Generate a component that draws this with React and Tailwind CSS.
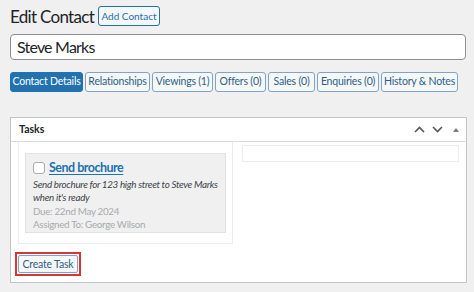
import React from 'react';

const font = { fontFamily: 'Lato, "Noto Sans", sans-serif' };

const tabs = [
  { label: 'Contact Details', w: 'w-[73px]' },
  { label: 'Relationships', w: 'w-[65px]' },
  { label: 'Viewings (1)', w: 'w-[61px]' },
  { label: 'Offers (0)', w: 'w-[51px]' },
  { label: 'Sales (0)', w: 'w-[47px]' },
  { label: 'Enquiries (0)', w: 'w-[62px]' },
  { label: 'History & Notes', w: 'w-[77px]' },
];

function Chevron({ up }) {
  return (
    <svg width="11" height="7" viewBox="0 0 11 7" fill="none">
      <path
        d={up ? 'M1 6 L5.5 1.5 L10 6' : 'M1 1 L5.5 5.5 L10 1'}
        stroke="#50575e"
        strokeWidth="1.6"
      />
    </svg>
  );
}

export default function App() {
  return (
    <div
      className="w-[474px] h-[292px] overflow-hidden bg-[#f0f0f1] px-[10px] pt-[6px] text-[#1d2327]"
      style={font}
    >
      {/* Title */}
      <div className="flex items-center gap-[6px] h-[20px]">
        <h1 className="w-[82px] text-[17px] leading-none font-normal tracking-[-0.7px] whitespace-nowrap">Edit Contact</h1>
        <button className="h-[20px] w-[62px] text-[10px] text-[#2271b1] border border-[#2271b1] bg-[#f6f7f7] rounded-[3px] leading-none whitespace-nowrap">
          Add Contact
        </button>
      </div>

      {/* Name input */}
      <div className="mt-[8px] w-[456px] h-[26px] flex items-center bg-white border border-[#8c8f94] rounded-[4px] px-[6px] text-[16px] tracking-[-0.8px]">
        Steve Marks
      </div>

      {/* Tabs */}
      <div className="mt-[12px] flex gap-[2px] h-[20px]">
        {tabs.map((t, i) => (
          <div
            key={t.label}
            className={
              i === 0
                ? `${t.w} h-full flex items-center justify-center whitespace-nowrap text-[10.5px] tracking-[-0.2px] rounded-[3px] bg-[#2271b1] text-white border border-[#2271b1]`
                : `${t.w} h-full flex items-center justify-center whitespace-nowrap text-[10.5px] tracking-[-0.2px] rounded-[3px] bg-[#f6f7f7] text-[#2c5f8a] border border-[#7fa4c6]`
            }
          >
            {t.label}
          </div>
        ))}
      </div>

      {/* Tasks panel */}
      <div className="mt-[25px] w-[457px] h-[166px] bg-white border border-[#c3c4c7]">
        <div className="h-[24px] flex items-center justify-between border-b border-[#dcdcde] pl-[8px] pr-[6px]">
          <span className="text-[10.5px] font-bold">Tasks</span>
          <div className="flex items-center gap-[7px]">
            <Chevron up />
            <Chevron />
            <svg width="8" height="6" viewBox="0 0 8 6" className="ml-[2px]">
              <path d="M4 1 L7 5 L1 5 Z" fill="#787c82" />
            </svg>
          </div>
        </div>

        <div className="flex pl-[7px] pr-[7px]">
          {/* left column */}
          <div className="w-[215px]">
            <div className="w-[215px] h-[102px] border border-t-0 border-[#ececed] px-[6px] pt-[11px]">
              <div className="w-[201px] h-[80px] bg-[#f0f0f1] border border-[#e2e2e4] pl-[7px] pt-[7px]">
                <div className="flex items-center gap-[4px] h-[14px]">
                  <span className="w-[12px] h-[12px] rounded-[3px] border border-[#a7aaad] bg-white" />
                  <span className="text-[12.5px] leading-none font-bold tracking-[-0.5px] text-[#2271b1] underline underline-offset-2">
                    Send brochure
                  </span>
                </div>
                <div className="mt-[3px] text-[9.8px] italic leading-[13px] tracking-[-0.3px] text-[#3c434a] whitespace-nowrap">
                  Send brochure for 123 high street to Steve Marks
                  <br />
                  when it's ready
                </div>
                <div className="mt-[1px] text-[9.8px] leading-[13px] tracking-[-0.3px] text-[#a7aaad] whitespace-nowrap">
                  Due: 22nd May 2024
                  <br />
                  Assigned To: George Wilson
                </div>
              </div>
            </div>
            <div className="mt-[8px] -ml-[3px] w-[66px] h-[24px] flex border-2 border-[#d63638] p-[1px]">
              <button className="flex-1 flex items-center justify-center text-[10.5px] tracking-[-0.2px] text-[#2c5f8a] bg-[#f6f7f7] border border-[#7fa4c6] rounded-[2px] leading-none whitespace-nowrap">
                Create Task
              </button>
            </div>
          </div>

          {/* right column */}
          <div className="ml-[9px] flex-1 pt-[3px]">
            <div className="h-[17px] border border-[#ececed]" />
          </div>
        </div>
      </div>
    </div>
  );
}
